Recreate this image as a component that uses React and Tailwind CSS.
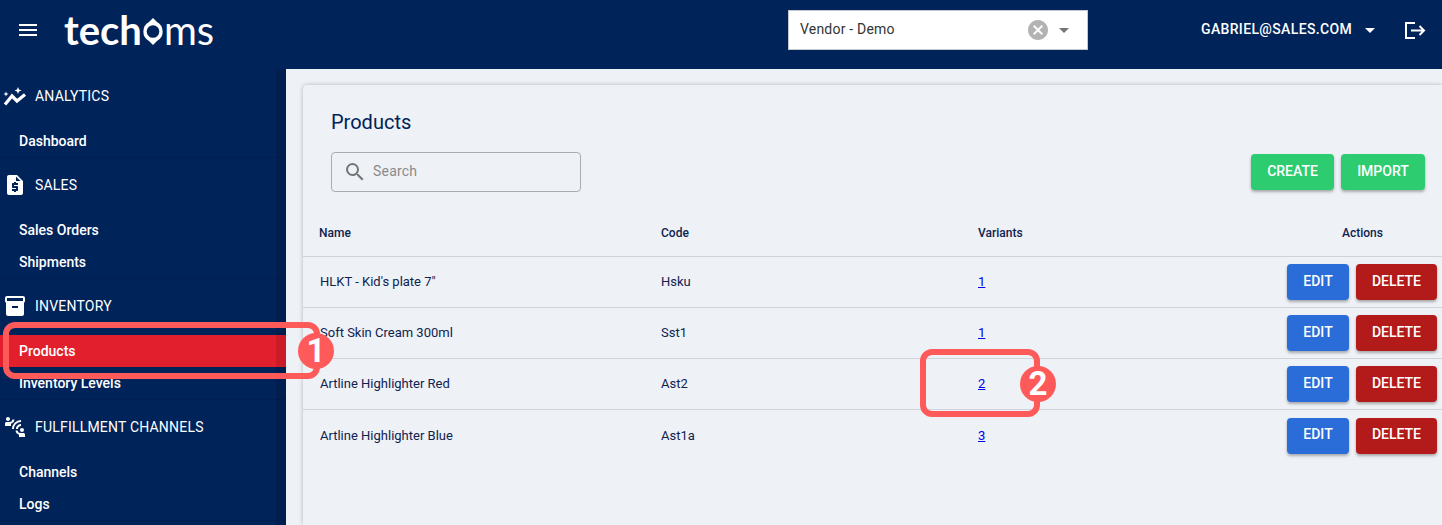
import React from "react";
import {
  MdRequestQuote,
  MdInventory2,
  MdConnectWithoutContact,
  MdMenu,
  MdSearch,
  MdCancel,
  MdArrowDropDown,
} from "react-icons/md";

// zigzag with two sparkles, thicker than the stock auto graph icon
const AnalyticsIcon = ({ size, className }) => (
  <svg width={size} height={size} viewBox="0 0 24 24" className={className}>
    <path d="M2 20.5 L9 12 L14 17 L22 10.5" fill="none" stroke="white" strokeWidth="3.2" />
    <path d="M3 7.5l.7 1.8 1.8.7-1.8.7-.7 1.8-.7-1.8-1.8-.7 1.8-.7z" fill="white" />
    <path d="M15 3l1 2.5 2.5 1-2.5 1-1 2.5-1-2.5-2.5-1 2.5-1z" fill="white" />
  </svg>
);

const menu = [
  { title: "ANALYTICS", icon: AnalyticsIcon, items: ["Dashboard"] },
  { title: "SALES", icon: MdRequestQuote, items: ["Sales Orders", "Shipments"] },
  { title: "INVENTORY", icon: MdInventory2, items: ["Products", "Inventory Levels"] },
  { title: "FULFILLMENT CHANNELS", icon: MdConnectWithoutContact, items: ["Channels", "Logs"] },
];

const products = [
  { name: 'HLKT - Kid\'s plate 7"', code: "Hsku", variants: 1 },
  { name: "Soft Skin Cream 300ml", code: "Sst1", variants: 1 },
  { name: "Artline Highlighter Red", code: "Ast2", variants: 2 },
  { name: "Artline Highlighter Blue", code: "Ast1a", variants: 3 },
];

const Logo = () => (
  <div className="flex items-center h-[40px] text-white font-['Lato',sans-serif] text-[40px] leading-none">
    <span className="font-bold">tech</span>
    <svg width="22" height="27" viewBox="0 0 22 27" className="mt-[4px] shrink-0">
      <path d="M11 0 L15 4 A10.8 10.8 0 0 1 15 23 L11 27 L7 23 A10.8 10.8 0 0 1 7 4 Z" fill="white" />
      <circle cx="11" cy="13.5" r="6.3" fill="#00235a" />
    </svg>
    <span>ms</span>
  </div>
);

const Header = () => (
  <header className="h-[69px] shrink-0 bg-[#00235a] flex items-center pb-[10px] text-white">
    <MdMenu size={24} className="ml-4 shrink-0" />
    <div className="ml-[24px] w-[151px]">
      <Logo />
    </div>
    <div className="ml-[573px] w-[300px] h-[40px] bg-white border border-[#c4c7cc] flex items-center pl-[11px] pr-[11px]">
      <span className="flex-1 text-[14px] text-[#333] tracking-[0.2px]">Vendor - Demo</span>
      <MdCancel size={24} className="mr-[2px] text-[#b3b3b3]" />
      <MdArrowDropDown size={24} className="text-[#757575]" />
    </div>
    <span className="ml-[113px] text-[14px] font-medium tracking-[0.35px]">GABRIEL@SALES.COM</span>
    <MdArrowDropDown size={24} className="ml-[6px]" />
    <svg width="24" height="24" viewBox="0 0 24 24" fill="none" stroke="white" strokeWidth="2" className="ml-[20px]">
      <path d="M13 5H4v15h9" />
      <path d="M9 12.5h13M17.5 8l4.5 4.5-4.5 4.5" />
    </svg>
  </header>
);

const Sidebar = () => (
  <aside className="relative w-[286px] shrink-0 bg-[#00235a] overflow-hidden font-['Roboto',sans-serif] text-white">
    {menu.map((section) => {
      const Icon = section.icon;
      return (
        <div key={section.title} className="border-b border-[#001f50]">
          <div className="h-[54px] flex items-center mb-[2px]">
            <Icon size={24} className="ml-[3px] shrink-0" />
            <span className="ml-2 text-[14px] tracking-[0.2px]">{section.title}</span>
          </div>
          {section.items.map((item) => (
            <div
              key={item}
              className={
                item === "Products"
                  ? "h-[32px] flex items-center pl-[19px] text-[14px] font-medium bg-[#e21f2c]"
                  : "h-[32px] flex items-center pl-[19px] text-[14px] font-medium"
              }
            >
              {item}
            </div>
          ))}
        </div>
      );
    })}
    {/* scrollbar track */}
    <div className="absolute top-0 bottom-0 right-0 w-[10px] bg-black/10" />
  </aside>
);

const ActionButton = ({ label, className }) => (
  <button
    className={`h-[36px] pb-[2px] rounded text-white text-[14px] font-medium shadow-[0_2px_3px_rgba(0,0,0,0.3)] ${className}`}
  >
    {label}
  </button>
);

const ProductsCard = () => (
  <div className="relative mt-4 ml-[17px] flex-1 bg-[#eef1f6] rounded-tl shadow-[0_0_4px_rgba(0,0,0,0.25)] font-['Roboto',sans-serif] text-[#0f2350]">
    <h1 className="pl-7 pt-[25px] text-[20px] leading-[24px] text-[#00235a]">Products</h1>
    <div className="flex items-center justify-between pl-7 pr-[17px] mt-[18px]">
      <div className="w-[250px] h-[40px] border border-[#a9adb3] rounded flex items-center pl-[11px]">
        <MdSearch size={24} className="text-[#757575]" />
        <span className="ml-[6px] mb-[2px] text-[14px] text-[#8a8a8a] tracking-[0.2px]">Search</span>
      </div>
      <div className="flex gap-[7px]">
        <ActionButton label="CREATE" className="w-[83px] bg-[#2ecc71]" />
        <ActionButton label="IMPORT" className="w-[84px] bg-[#2ecc71]" />
      </div>
    </div>

    <div className="grid grid-cols-[358px_317px_1fr_155px] mt-[20px] h-[45px] pb-[2px] items-center border-b border-[#d0d3d8] text-[12px] font-medium">
      <span className="pl-4">Name</span>
      <span>Code</span>
      <span>Variants</span>
      <span className="pl-[55px]">Actions</span>
    </div>

    {products.map((p, i) => (
      <div
        key={p.code}
        className={
          i < products.length - 1
            ? "grid grid-cols-[358px_317px_1fr_155px] h-[51px] items-center border-b border-[#d0d3d8] text-[13px]"
            : "grid grid-cols-[358px_317px_1fr_155px] h-[51px] items-center text-[13px]"
        }
      >
        <span className="pl-[17px]">{p.name}</span>
        <span>{p.code}</span>
        <a className="text-[#0000ee] underline">{p.variants}</a>
        <div className="flex gap-[7px]">
          <ActionButton label="EDIT" className="w-[62px] bg-[#2a6dd9]" />
          <ActionButton label="DELETE" className="w-[81px] bg-[#b31b1b]" />
        </div>
      </div>
    ))}
  </div>
);

const Callout = ({ number, className, badgeClassName }) => (
  <div className={`absolute border-[6px] border-[#ff5a5a] rounded-[12px] ${className}`}>
    <span
      className={`absolute w-[36px] h-[36px] rounded-full bg-[#ff5a5a] text-white text-[33px] font-bold leading-[36px] text-center font-['Roboto',sans-serif] ${badgeClassName}`}
    >
      {number}
    </span>
  </div>
);

export default function App() {
  return (
    <div className="relative w-[1442px] h-[525px] overflow-hidden flex flex-col bg-[#eef1f6] font-['Roboto',sans-serif]">
      <Header />
      <div className="flex flex-1 min-h-0">
        <Sidebar />
        <ProductsCard />
      </div>
      <Callout
        number="1"
        className="left-[3px] top-[322px] w-[317px] h-[57px]"
        badgeClassName="left-[289px] top-[5px]"
      />
      <Callout
        number="2"
        className="left-[920px] top-[349px] w-[120px] h-[68px]"
        badgeClassName="left-[94px] top-[11px]"
      />
    </div>
  );
}
